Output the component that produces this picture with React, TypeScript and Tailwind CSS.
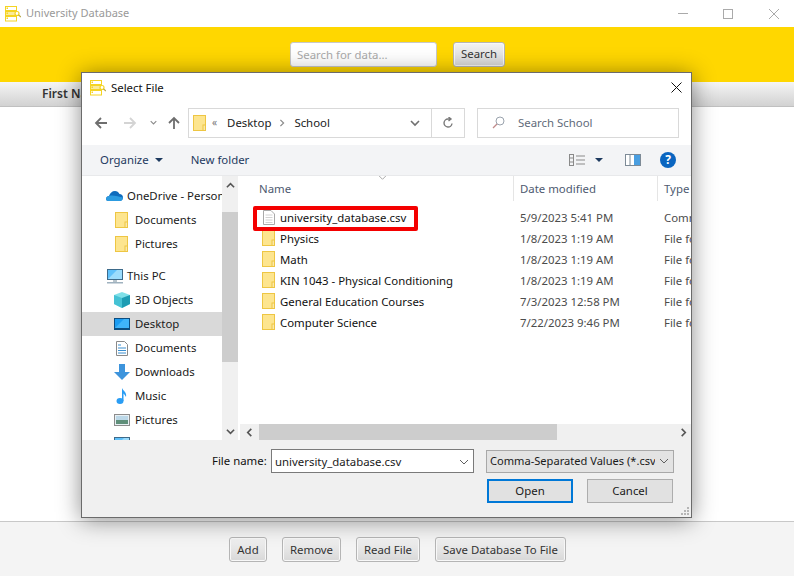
import React from 'react';

const FONT = "font-['Noto_Sans','Open_Sans',sans-serif]";

const AppLogo = ({ className }: { className?: string }) => (
  <svg viewBox="0 0 16 16" className={className} fill="none" stroke="#f5d423" strokeWidth="1">
    <rect x="0.5" y="0.5" width="11" height="4" />
    <rect x="0.5" y="5.5" width="11" height="4" fill="#faeb9a" />
    <rect x="0.5" y="10.5" width="11" height="4.5" />
    <rect x="1.5" y="1.5" width="1.5" height="1.5" fill="#f5d423" stroke="none" />
    <rect x="1.5" y="6.5" width="1.5" height="1.5" fill="#f5d423" stroke="none" />
    <rect x="1.5" y="11.5" width="1.5" height="1.5" fill="#f5d423" stroke="none" />
    <circle cx="12" cy="7.5" r="2" fill="#fff" strokeWidth="1.2" />
    <path d="M13.500 9l2.500 2" stroke="#b9a84a" strokeWidth="1.2" />
  </svg>
);

const Folder = ({ className = 'w-[13px] h-[16px]' }: { className?: string }) => (
  <svg viewBox="0 0 13 16" className={className}>
    <rect x="0.5" y="0.5" width="12" height="15" fill="#fde58f" stroke="#eec643" />
    <rect x="10" y="10" width="2.5" height="5.5" fill="#fbe9a9" stroke="#eec643" />
  </svg>
);

const FileIcon = () => (
  <svg viewBox="0 0 12 15" className="w-[12px] h-[15px]" fill="#fff" stroke="#a9a9a9">
    <path d="M0.5 0.5h7.5l3.5 3.5v10.5h-11z" />
    <path d="M2.5 5h7M2.5 7.5h7M2.5 10h7M2.5 12.5h7" strokeWidth="0.8" stroke="#c6c6c6" />
  </svg>
);

const Chevron = ({ dir = 'down', className, color = '#606060', w = 1.5 }: { dir?: string; className?: string; color?: string; w?: number }) => {
  const d = dir === 'down' ? 'M1 3l4 4 4-4' : dir === 'up' ? 'M1 7l4-4 4 4' : dir === 'left' ? 'M7 1L3 5l4 4' : 'M3 1l4 4-4 4';
  return (
    <svg viewBox="0 0 10 10" className={className ?? 'w-[10px] h-[10px]'} fill="none" stroke={color} strokeWidth={w}>
      <path d={d} />
    </svg>
  );
};

const Arrow = ({ dir, color }: { dir: 'left' | 'right' | 'up'; color: string }) => (
  <svg viewBox="0 0 14 14" className="w-[14px] h-[14px]" fill="none" stroke={color} strokeWidth="1.8">
    {dir === 'left' && <path d="M13 7H2M7 2L2 7l5 5" />}
    {dir === 'right' && <path d="M1 7h11M7 2l5 5-5 5" />}
    {dir === 'up' && <path d="M7 13V2M2 7l5-5 5 5" />}
  </svg>
);

const NavIcon = ({ kind }: { kind: string }) => {
  if (kind === 'cloud') return (
    <svg viewBox="0 0 17 12" className="w-[17px] h-[12px]">
      <path d="M0 9c0-2 1.500-3 3-3 1-3 3-5 6-5 2 0 3.500 1 4.500 3 2 0 3.500 1.500 3.500 3.500S15.500 11 14 11H2.500C1 11 0 10 0 9z" fill="#0f6cbd" />
      <path d="M0 9c0-2 3-3.500 6-3.500S14 7 17 7.500c0 2-1.500 3.500-3 3.500H2.500C1 11 0 10 0 9z" fill="#2c9be0" />
    </svg>
  );
  if (kind === 'pc') return (
    <svg viewBox="0 0 16 15" className="w-[16px] h-[15px]">
      <rect x="0.5" y="0.5" width="15" height="10" fill="#5fc1fb" stroke="#3d6a8a" />
      <path d="M1 10L10 1h5v9z" fill="#9bdcfd" />
      <rect x="0" y="13" width="16" height="1.500" fill="#9fb2bf" />
      <rect x="6" y="11" width="4" height="2" fill="#b8c4cc" />
    </svg>
  );
  if (kind === 'cube') return (
    <svg viewBox="0 0 16 16" className="w-[16px] h-[16px]">
      <path d="M8 0l8 3v9l-8 4-8-4V3z" fill="#7fe0e8" />
      <path d="M8 6l8-3v9l-8 4z" fill="#1d9cb3" />
      <path d="M8 6L0 3v9l8 4z" fill="#45c2d4" />
    </svg>
  );
  if (kind === 'desktop') return (
    <svg viewBox="0 0 16 12" className="w-[16px] h-[12px]">
      <rect x="0.5" y="0.5" width="15" height="11" fill="#1b9cf2" stroke="#0c4d80" />
      <path d="M1 10L10 1h5v9z" fill="#3fb4fa" />
      <rect x="1" y="10" width="14" height="1" fill="#0c4d80" />
    </svg>
  );
  if (kind === 'doc') return (
    <svg viewBox="0 0 12 15" className="w-[12px] h-[15px]" fill="#fff" stroke="#8a8a8a">
      <path d="M0.5 0.5h8l3 3v11h-11z" />
      <path d="M2 4h3M2 7h8M2 9.500h8M2 12h8" stroke="#3a8fd0" strokeWidth="1" />
    </svg>
  );
  if (kind === 'down') return (
    <svg viewBox="0 0 16 16" className="w-[16px] h-[16px]">
      <path d="M5 0h6v8h5l-8 8-8-8h5z" fill="#3d94dc" />
    </svg>
  );
  if (kind === 'music') return (
    <svg viewBox="0 0 12 16" className="w-[12px] h-[16px]">
      <ellipse cx="4" cy="13" rx="3.500" ry="3" fill="#2a9df4" />
      <path d="M6 13V0c1 3 5 4 4 9-1-2-2-3-2.500-3.500V13z" fill="#2a9df4" />
    </svg>
  );
  return (
    <svg viewBox="0 0 16 12" className="w-[16px] h-[12px]">
      <rect x="0.5" y="0.5" width="15" height="11" fill="#e8f0f4" stroke="#8c8c8c" />
      <rect x="2" y="6" width="12" height="4" fill="#5f8f7a" />
      <rect x="2" y="2" width="12" height="4" fill="#bcd8e8" />
    </svg>
  );
};

const NavRow = ({ icon, label, indent, active }: { icon: React.ReactNode; label: string; indent?: boolean; active?: boolean }) => (
  <div className={`h-[24px] shrink-0 flex items-center whitespace-nowrap ${indent ? 'pl-[31px]' : 'pl-[24px]'} ${active ? 'bg-[#d9d9d9]' : ''}`}>
    <span className="w-[17px] flex justify-center shrink-0">{icon}</span>
    <span className={indent ? 'ml-[5px]' : 'ml-[4px]'}>{label}</span>
  </div>
);

const FileRow = ({ name, date, type, csv }: { name: string; date: string; type: string; csv?: boolean }) => (
  <div className="h-[21px] flex items-center whitespace-nowrap">
    <div className="w-[280px] pl-[22px] flex items-center shrink-0">
      <span className="w-[13px] flex justify-center">{csv ? <FileIcon /> : <Folder />}</span>
      <span className="ml-[5px] text-[#111]">{name}</span>
    </div>
    <div className="w-[144px] shrink-0 text-[#4c4c4c]">{date}</div>
    <div className="text-[#4c4c4c]">{type}</div>
  </div>
);

const FxButton = ({ label, className }: { label: string; className: string }) => (
  <button className={`h-[25px] rounded-[3px] border border-[#b5b5b5] bg-gradient-to-b from-[#f2f2f2] to-[#d8d8d8] text-[#333] text-[11.4px] shadow-[inset_0_0_0_1px_#f8f8f8] ${className}`}>
    {label}
  </button>
);

const files = [
  { name: 'university_database.csv', date: '5/9/2023 5:41 PM', type: 'Comma', csv: true },
  { name: 'Physics', date: '1/8/2023 1:19 AM', type: 'File fo' },
  { name: 'Math', date: '1/8/2023 1:19 AM', type: 'File fo' },
  { name: 'KIN 1043 - Physical Conditioning', date: '1/8/2023 1:19 AM', type: 'File fo' },
  { name: 'General Education Courses', date: '7/3/2023 12:58 PM', type: 'File fo' },
  { name: 'Computer Science', date: '7/22/2023 9:46 PM', type: 'File fo' },
];

function SelectFileDialog() {
  return (
    <div className="absolute left-[81px] top-[72px] w-[611px] h-[446px] bg-white border border-[#6b6b6b] shadow-[0_2px_22px_rgba(0,0,0,0.45)] flex flex-col text-[11.4px] text-[#1a1a1a]">
      {/* title */}
      <div className="h-[29px] shrink-0 flex items-center pl-[8px] pr-[9px]">
        <AppLogo className="w-[16px] h-[16px]" />
        <span className="ml-[5px] text-[#111]">Select File</span>
        <svg viewBox="0 0 11 11" className="ml-auto w-[11px] h-[11px]" stroke="#111" strokeWidth="1"><path d="M0.5 0.5l10 10M10.500 0.5l-10 10" /></svg>
      </div>
      {/* address bar */}
      <div className="h-[43px] shrink-0 flex items-center pt-[5px] pb-[7px] pl-[12px]">
        <Arrow dir="left" color="#6e6e6e" />
        <span className="ml-[15px]"><Arrow dir="right" color="#d4d4d4" /></span>
        <span className="ml-[13px]"><Chevron className="w-[7px] h-[7px]" color="#8a8a8a" /></span>
        <span className="ml-[10px]"><Arrow dir="up" color="#6e6e6e" /></span>
        <div className="ml-[7px] w-[277px] h-[30px] border border-[#d9d9d9] flex items-center">
          <span className="ml-[4px] flex"><Folder className="w-[13px] h-[16px]" /></span>
          <span className="ml-[6px] text-[#777] text-[10px]">«</span>
          <span className="ml-[10px]">Desktop</span>
          <span className="ml-[7px]"><Chevron dir="right" className="w-[8px] h-[8px]" color="#8a8a8a" /></span>
          <span className="ml-[8px]">School</span>
          <span className="ml-auto w-[33px] flex justify-center"><Chevron className="w-[10px] h-[10px]" color="#707070" w={1.6} /></span>
          <span className="h-full w-[33px] border-l border-[#d9d9d9] flex items-center justify-center">
            <svg viewBox="0 0 12 12" className="w-[12px] h-[12px]" fill="none" stroke="#7a7a7a" strokeWidth="1.400">
              <path d="M10 6.500a4 4 0 1 1-4-4.500h2.500M6.500 0l2.500 2-2.500 2" />
            </svg>
          </span>
        </div>
        <div className="ml-[12px] w-[202px] h-[30px] border border-[#d9d9d9] flex items-center text-[#5f6b7a]">
          <svg viewBox="0 0 13 13" className="ml-[14px] w-[13px] h-[13px]" fill="none">
            <circle cx="8" cy="5" r="4" stroke="#9aa3ad" />
            <path d="M5 8l-4 4" stroke="#c08a8a" strokeWidth="1.200" />
          </svg>
          <span className="ml-[13px]">Search School</span>
        </div>
      </div>
      {/* toolbar */}
      <div className="h-[31px] shrink-0 bg-[#f3f4f6] border-b border-[#e8e9eb] flex items-center text-[#1e3a5f] pl-[18px] pr-[15px]">
        <span>Organize</span>
        <svg viewBox="0 0 8 4" className="ml-[6px] w-[8px] h-[4px]" fill="#1e3a5f"><path d="M0 0h8L4 4z" /></svg>
        <span className="ml-[28px]">New folder</span>
        <svg viewBox="0 0 16 12" className="ml-auto w-[16px] h-[12px]" fill="none" stroke="#8a8a8a">
          <rect x="0.5" y="0.5" width="4" height="11" />
          <path d="M0.5 4h4M0.5 8h4M7 2h9M7 6h9M7 10h9" />
        </svg>
        <svg viewBox="0 0 8 4" className="ml-[10px] w-[8px] h-[4px]" fill="#1e3a5f"><path d="M0 0h8L4 4z" /></svg>
        <svg viewBox="0 0 16 12" className="ml-[22px] w-[16px] h-[12px]">
          <rect x="0.5" y="0.5" width="15" height="11" fill="#fff" stroke="#7d8a96" />
          <rect x="9" y="1" width="6" height="10" fill="#4a9ee0" />
          <path d="M5 1v10" stroke="#7d8a96" />
        </svg>
        <span className="ml-[19px] w-[16px] h-[16px] rounded-full bg-[#0a65c0] text-white font-bold text-[12px] leading-[16px] text-center">?</span>
      </div>
      {/* panes */}
      <div className="flex-1 min-h-0 flex">
        <div className="w-[140px] shrink-0 overflow-hidden flex flex-col pt-[8px]">
          <NavRow icon={<NavIcon kind="cloud" />} label="OneDrive - Personal" />
          <NavRow indent icon={<Folder />} label="Documents" />
          <NavRow indent icon={<Folder />} label="Pictures" />
          <div className="h-[8px] shrink-0" />
          <NavRow icon={<NavIcon kind="pc" />} label="This PC" />
          <NavRow indent icon={<NavIcon kind="cube" />} label="3D Objects" />
          <NavRow indent active icon={<NavIcon kind="desktop" />} label="Desktop" />
          <NavRow indent icon={<NavIcon kind="doc" />} label="Documents" />
          <NavRow indent icon={<NavIcon kind="down" />} label="Downloads" />
          <NavRow indent icon={<NavIcon kind="music" />} label="Music" />
          <NavRow indent icon={<NavIcon kind="pic" />} label="Pictures" />
          <NavRow indent icon={<NavIcon kind="pc" />} label="Videos" />
        </div>
        <div className="w-[16px] shrink-0 bg-[#f0f0f0] flex flex-col">
          <div className="h-[36px] flex items-start pt-[5px] justify-center"><Chevron dir="up" className="w-[9px] h-[9px]" color="#555" w={1.8} /></div>
          <div className="h-[150px] bg-[#cdcdcd]" />
          <div className="mt-auto h-[17px] flex items-center justify-center"><Chevron className="w-[9px] h-[9px]" color="#555" w={1.8} /></div>
        </div>
        <div className="flex-1 min-w-0 ml-[2px] flex flex-col overflow-hidden">
          <div className="relative h-[25px] shrink-0 flex items-center whitespace-nowrap text-[#4e5a70]">
            <Chevron className="absolute left-[138px] top-[-3px] w-[9px] h-[9px]" color="#a0a0a0" w={1} />
            <div className="w-[274px] shrink-0 pl-[19px] h-full flex items-center border-r border-[#e5e5e5]">Name</div>
            <div className="w-[144px] shrink-0 pl-[6px] h-full flex items-center border-r border-[#e5e5e5]">Date modified</div>
            <div className="pl-[6px]">Type</div>
          </div>
          <div className="flex-1 min-h-0 relative pt-[6px] overflow-hidden">
            {files.map((f) => <FileRow key={f.name} {...f} />)}
            <div className="absolute left-[13px] top-[5px] w-[165px] h-[25px] border-[4px] border-[#f40000] rounded-[2px]" />
          </div>
          <div className="h-[16px] shrink-0 bg-[#f0f0f0] flex items-center">
            <span className="w-[19px] flex justify-center"><Chevron dir="left" className="w-[9px] h-[9px]" color="#555" w={1.8} /></span>
            <div className="w-[298px] h-full bg-[#cdcdcd]" />
            <span className="ml-auto w-[15px] flex justify-center"><Chevron dir="right" className="w-[9px] h-[9px]" color="#555" w={1.8} /></span>
          </div>
        </div>
      </div>
      {/* footer */}
      <div className="relative h-[77px] shrink-0 bg-[#f0f0f0] flex flex-col pl-[130px] pr-[18px] pt-[9px]">
        <div className="flex items-center h-[24px]">
          <span className="w-[59px] shrink-0 whitespace-nowrap text-[#111]">File name:</span>
          <div className="w-[203px] shrink-0 h-[24px] bg-white border border-[#7a7a7a] flex items-center pl-[3px] pt-[1px]">
            <span>university_database.csv</span>
            <span className="ml-auto mr-[4px]"><Chevron color="#606060" w={1} /></span>
          </div>
          <div className="ml-[12px] w-[188px] shrink-0 h-[23px] bg-[#e3e3e3] border border-[#a8a8a8] flex items-center pl-[3px] whitespace-nowrap overflow-hidden">
            <span className="w-[165px] overflow-hidden text-[11.1px]">Comma-Separated Values (*.csv)</span>
            <span className="ml-auto mr-[4px]"><Chevron color="#606060" w={1} /></span>
          </div>
        </div>
        <div className="flex justify-end gap-[14px] mt-[6px]">
          <button className="w-[86px] h-[24px] bg-[#e1e1e1] border-2 border-[#0078d7]">Open</button>
          <button className="w-[86px] h-[24px] bg-[#e1e1e1] border border-[#adadad]">Cancel</button>
        </div>
        <svg viewBox="0 0 8 8" className="absolute right-[2px] bottom-[2px] w-[8px] h-[8px]" fill="#b5b5b5">
          <rect x="6" y="0" width="2" height="2" /><rect x="3" y="3" width="2" height="2" /><rect x="6" y="3" width="2" height="2" />
          <rect x="0" y="6" width="2" height="2" /><rect x="3" y="6" width="2" height="2" /><rect x="6" y="6" width="2" height="2" />
        </svg>
      </div>
    </div>
  );
}

export default function App() {
  return (
    <div className={`relative w-[794px] h-[576px] overflow-hidden bg-white flex flex-col ${FONT}`}>
      {/* window title bar */}
      <div className="h-[27px] shrink-0 flex items-center pl-[5px] text-[11px] text-[#999]">
        <AppLogo className="w-[16px] h-[16px]" />
        <span className="ml-[5px]">University Database</span>
        <div className="ml-auto flex items-center">
          <span className="w-[10px] h-px bg-[#aaa] mr-[35px]" />
          <span className="w-[10px] h-[10px] border border-[#aaa] mr-[36px]" />
          <svg viewBox="0 0 10 10" className="w-[10px] h-[10px] mr-[15px]" stroke="#aaa"><path d="M0 0l10 10M10 0L0 10" /></svg>
        </div>
      </div>
      {/* search strip */}
      <div className="h-[55px] shrink-0 bg-[#ffd700] flex items-center pl-[290px] pb-[1px]">
        <input readOnly placeholder="Search for data..." className="w-[147px] h-[25px] rounded-[3px] bg-white border border-[#c8c8c8] px-[6px] text-[11.4px] placeholder:text-[#aaa] outline-none" />
        <FxButton label="Search" className="ml-[16px] w-[52px]" />
      </div>
      {/* table header */}
      <div className="h-[25px] shrink-0 bg-gradient-to-b from-[#f5f5f5] to-[#d2d2d2] border-b border-[#c0c0c0] flex items-center pl-[42px] text-[12px] font-semibold text-[#333]">
        First Name
      </div>
      <div className="flex-1 bg-white" />
      {/* bottom actions */}
      <div className="h-[55px] shrink-0 bg-[#f4f4f4] border-t border-[#c8c8c8] flex items-center justify-center gap-[15px] pl-[1px] pt-[1px]">
        <FxButton label="Add" className="w-[38px]" />
        <FxButton label="Remove" className="w-[59px]" />
        <FxButton label="Read File" className="w-[64px]" />
        <FxButton label="Save Database To File" className="w-[131px]" />
      </div>
      <SelectFileDialog />
    </div>
  );
}
